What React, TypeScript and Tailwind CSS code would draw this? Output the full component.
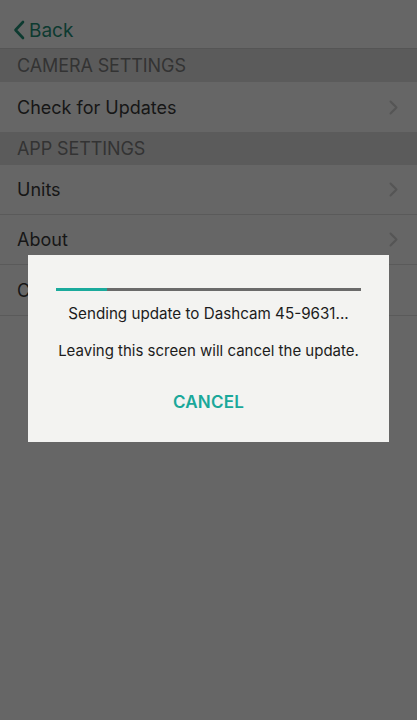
import React from "react";

const font = { fontFamily: "Inter, 'Liberation Sans', sans-serif" };

function Chevron() {
  return (
    <svg width="9" height="15" viewBox="0 0 9 15" className="shrink-0">
      <path d="M1.5 1.5 L7.5 7.5 L1.5 13.5" fill="none" stroke="#555555" strokeWidth="2" strokeLinecap="round" strokeLinejoin="round" />
    </svg>
  );
}

function Row({ label, last }: { label: string; last?: boolean }) {
  return (
    <div className={`h-[50px] flex items-center justify-between pl-[17px] pr-[19px] ${last ? "" : "border-b border-[#5a5a5a]"}`}>
      <span className="text-[18px] text-[#161616]">{label}</span>
      <Chevron />
    </div>
  );
}

function Header({ label }: { label: string }) {
  return (
    <div className="h-[33px] bg-[#5b5b5b] flex items-center pl-[17px]">
      <span className="text-[18px] text-[#333333] tracking-[-0.1px]">{label}</span>
    </div>
  );
}

export default function App() {
  return (
    <div className="relative w-[417px] h-[720px] bg-[#666666] overflow-hidden" style={font}>
      <div className="h-[49px] border-b border-[#555555] flex items-end pb-[7px] pl-[13px]">
        <svg width="12" height="20" viewBox="0 0 12 20" className="mr-[4px] mb-[1px]">
          <path d="M10 2 L2.5 10 L10 18" fill="none" stroke="#0d3a30" strokeWidth="2.6" strokeLinecap="round" strokeLinejoin="round" />
        </svg>
        <span className="text-[19px] text-[#0d3a30] leading-none mb-[1px]">Back</span>
      </div>
      <Header label="CAMERA SETTINGS" />
      <Row label="Check for Updates" last />
      <Header label="APP SETTINGS" />
      <Row label="Units" />
      <Row label="About" />
      <div className="h-[51px] flex items-center pl-[17px] border-b border-[#5a5a5a]">
        <span className="text-[18px] text-[#161616]">Contact Us</span>
      </div>

      <div className="absolute left-[28px] top-[255px] w-[361px] h-[187px] bg-[#f3f3f1] flex flex-col items-center">
        <div className="mt-[33px] w-[305px] h-[3px] bg-[#6a6a6a] flex">
          <div className="w-[51px] h-full bg-[#1aaa9c]" />
        </div>
        <div className="mt-[14px] text-[15.2px] text-[#1c1c1c] leading-[18px]">Sending update to Dashcam 45-9631...</div>
        <div className="mt-[19px] text-[15px] text-[#1c1c1c] leading-[18px]">Leaving this screen will cancel the update.</div>
        <div className="mt-[32px] text-[17px] font-semibold text-[#1aa89a] leading-[20px] tracking-[0.2px]">CANCEL</div>
      </div>
    </div>
  );
}
